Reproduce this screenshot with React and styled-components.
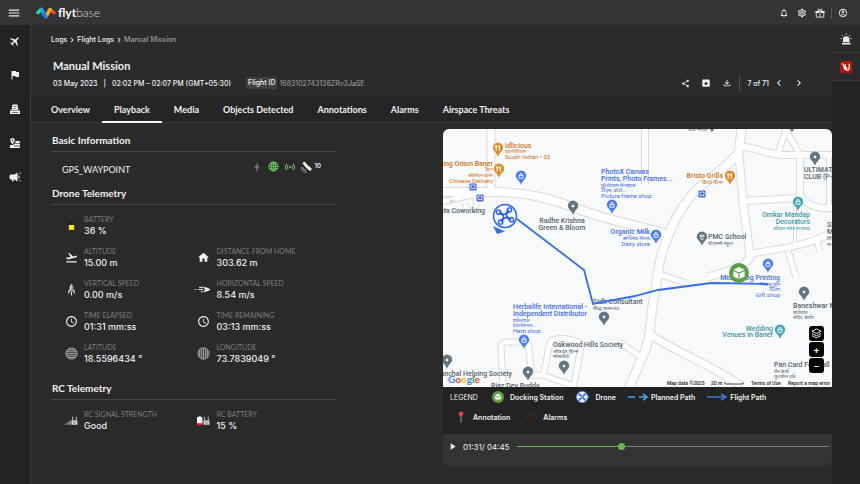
import React, { useState } from 'react'
import styled, { createGlobalStyle } from 'styled-components';
import {
  MdMenu, MdOutlineNotifications, MdOutlineSettings, MdOutlineAccountCircle, MdFlag,
  MdShare, MdArchive, MdOutlineFileDownload, MdChevronLeft, MdChevronRight,
  MdFlightTakeoff, MdHome, MdAccessTime, MdBolt, MdSensors, MdPlayArrow,
  MdLocalAirport,
} from 'react-icons/md';

/* ---------- icons ---------- */

const LogoMark = () => (
  <svg width='20' height='12' viewBox='0 0 20 12' fill='none' strokeLinecap='round' strokeWidth='3.6'>
    <path d='M2 5.4 5 2.4' stroke='#2fd39a' />
    <path d='M14.6 3 18 5.6' stroke='#e8452f' />
    <path d='M5.6 2.6 9.6 9.6' stroke='#1ba4ea' />
    <path d='M10 9.4 14 2.6' stroke='#f9a826' />
    <path d='M8 7.4 9.6 9.6' stroke='#1977e6' />
  </svg>
);

const GiftIcon = () => (
  <svg width='10' height='10' viewBox='0 0 24 24' fill='none' stroke='currentColor' strokeWidth='2'>
    <path d='M1 7h22v5H1z' fill='currentColor' stroke='none' />
    <path d='M3 12v10h18V12M12 7v15' />
    <path d='M12 7C9 7 7 6 7 4s3-3 5 3c2-6 5-5 5-3s-2 3-5 3' />
    <path d='M12 7v5' stroke='#343437' />
  </svg>
);

const DockIcon = () => (
  <svg viewBox='0 0 24 24' fill='currentColor'>
    <path d='M5 14 7 3h10l2 11zM2 15h20v7H2z' />
    <path d='M9 7h6M8 11h5M5 19h14' stroke='#222325' strokeWidth='1.2' />
  </svg>
);

const MissionIcon = () => (
  <svg viewBox='0 0 24 24' fill='currentColor'>
    <path d='M7 2a4.500 4.500 0 0 1 4.500 4.500C11.500 9.500 7 14 7 14S2.500 9.500 2.500 6.500A4.500 4.500 0 0 1 7 2z' />
    <circle cx='7' cy='6.500' r='1.600' fill='#222325' />
    <path d='M13 8h7a2 2 0 0 1 0 4h-7zM2 16h6l3-3h9a2 2 0 0 1 2 2v5a2 2 0 0 1-2 2H2z' />
    <path d='M10 18h12' stroke='#222325' strokeWidth='1.500' />
  </svg>
);

const MegaphoneIcon = () => (
  <svg viewBox='0 0 24 24' fill='currentColor'>
    <path d='M17 3v18l-6-4H9v4H6v-4H4a3 3 0 0 1-3-3v-4a3 3 0 0 1 3-3h7zM19 8c3 1 3 7 0 8zM20 4l3-1v3zM20 20l3 1v-3z' />
  </svg>
);

const SirenIcon = () => (
  <svg viewBox='0 0 24 24' fill='currentColor'>
    <path d='M6 18v-5a6.500 6.500 0 0 1 13 0v5zM4 19h17v4H4z' />
    <path d='M12.500 1v3M4 4l2.500 2.500M21 4l-2.500 2.500M1 11h3M21 11h3' stroke='currentColor' strokeWidth='1.600' />
    <path d='M4 19h17' stroke='#333' strokeWidth='1' fill='none' />
  </svg>
);

const RedIcon = () => (
  <svg width='12' height='12' viewBox='0 0 12 12' fill='none'>
    <rect width='12' height='12' rx='2' fill='#b3160f' />
    <path d='M2 2.600c1.400 0 1.400 1 1.900 3C4.600 9.800 9.200 10.400 9.200 7V2.800M5.200 3v2.600c0 2 1.600 2.600 1.800.6' stroke='#fff' strokeWidth='1.200' />
  </svg>
);

const SatelliteIcon = () => (
  <svg width='12' height='12' viewBox='0 0 24 24' fill='none'>
    <path d='M6 1 11 5 7 9 3 5zM10 5l7 7-4 4-7-7zM17 11l5 5-4 4-5-4z' fill='#f2f2f2' />
    <path d='M1 12a11 11 0 0 0 10 11M4.500 13a7 7 0 0 0 6.500 6.500' stroke='#a8a8a8' strokeWidth='1.800' />
  </svg>
);

const BatteryIcon = () => (
  <svg viewBox='0 0 24 24'>
    <path d='M7 6h3V4h4v2h4v6H7z' fill='#222' />
    <rect x='7' y='11' width='10' height='9' fill='#f4ec15' />
  </svg>
);

const VerticalSpeedIcon = () => (
  <svg viewBox='0 0 24 24' fill='#e6e6e6'>
    <path d='M12 1c3 3 4 6 4 10v5H8v-5c0-4 1-7 4-10z' fill='#8c8c8c' />
    <path d='M12 2v6l-1 6H9v-4c0-3 1-6 3-8zM8 12v7l-2 1v-6zM16 12v7l2 1v-6zM11 16h2v7h-2z' />
  </svg>
);

const HorizontalSpeedIcon = () => (
  <svg viewBox='0 0 24 24' fill='none' stroke='#d6d6d6' strokeWidth='2' overflow='visible'>
    <path d='M13 7.500c4 0 8 2 12 4.500-4 2.500-8 4.500-12 4.500z' fill='#f5f5f5' stroke='none' />
    <path d='M4 8h8M7 16h5M-4 12h3M2 12h10' />
    <circle cx='13.500' cy='12' r='1.800' fill='#444' stroke='none' />
  </svg>
);

const LinesGlobe = ({ vertical }) => (
  <svg viewBox='0 0 24 24' fill='none' stroke='#b4b4b4' strokeWidth='1.400'>
    <circle cx='12' cy='12' r='10.500' fill='#4a4a4a' />
    {vertical
      ? <path d='M12 1.500v21M8 2v20M16 2v20M4.500 5v14M19.500 5v14' />
      : <path d='M1.500 12h21M2 8h20M2 16h20M5 4.500h14M5 19.500h14' />}
  </svg>
);

const GreenGlobe = () => (
  <svg width='11' height='11' viewBox='0 0 24 24' fill='none' stroke='#63c558' strokeWidth='2.200'>
    <circle cx='12' cy='12' r='10' />
    <ellipse cx='12' cy='12' rx='4.500' ry='10' />
    <path d='M2 12h20M4 7h16M4 17h16M12 2v20' />
  </svg>
);

const Remote = () => (
  <g fill='#dcdcdc'>
    <path d='M12 12h11v8H12zM13.500 5h1.500v7h-1.500zM20 5h1.500v7H20z' />
    <path d='M14.500 15h2M19 15h2M16 18h3' stroke='#333' strokeWidth='1.400' />
  </g>
);

const RcSignalIcon = () => (
  <svg viewBox='0 0 24 24'>
    <path d='M0 18h2v2H0zM3 16h2v4H3zM6 14h2v6H6zM9 12h2v8H9z' fill='#a5a5a5' />
    <Remote />
  </svg>
);

const RcBatteryIcon = () => (
  <svg viewBox='0 0 24 24'>
    <path d='M0 6h3V4h4v2h3v12H0z' fill='#fff' />
    <path d='M0 17h10v4H0z' fill='#e02020' />
    <Remote />
  </svg>
);

const LayersIcon = () => (
  <svg width='11' height='11' viewBox='0 0 24 24' fill='none' stroke='#fff' strokeWidth='2' strokeLinejoin='round'>
    <path d='M12 2 22 7 12 12 2 7zM2 12l10 5 10-5M2 16.500l10 5 10-5' />
  </svg>
);

const Cube = () => (
  <g fill='#fff'>
    <path d='M0-6 5.500-3.200 0-.4-5.500-3.200z' />
    <path d='M-5.600-2-.6.600V6l-5-2.600zM5.600-2 .6.600V6l5-2.600z' />
  </g>
);

const DroneShape = () => (
  <g fill='none' stroke='#2a63e8' strokeWidth='1.400'>
    <path d='M-5-5 5 5M5-5-5 5' strokeWidth='2.400' />
    <circle cx='-5.500' cy='-5' r='2.200' />
    <circle cx='5.500' cy='-5' r='2.200' />
    <circle cx='-5.500' cy='5' r='2.200' />
    <circle cx='5.500' cy='5' r='2.200' />
    <circle r='1.800' fill='#fff' />
  </g>
);

/* ---------- data ---------- */

const tabs = ['Overview', 'Playback', 'Media', 'Objects Detected', 'Annotations', 'Alarms', 'Airspace Threats'];

const droneStats = [
  { label: 'BATTERY', value: '36 %', icon: <BatteryIcon />, wide: true },
  { label: 'ALTITUDE', value: '15.00 m', icon: <MdFlightTakeoff /> },
  { label: 'DISTANCE FROM HOME', value: '303.62 m', icon: <MdHome /> },
  { label: 'VERTICAL SPEED', value: '0.00 m/s', icon: <VerticalSpeedIcon /> },
  { label: 'HORIZONTAL SPEED', value: '8.54 m/s', icon: <HorizontalSpeedIcon /> },
  { label: 'TIME ELAPSED', value: '01:31 mm:ss', icon: <MdAccessTime /> },
  { label: 'TIME REMAINING', value: '03:13 mm:ss', icon: <MdAccessTime /> },
  { label: 'LATITUDE', value: '18.5596434 °', icon: <LinesGlobe /> },
  { label: 'LONGITUDE', value: '73.7839049 °', icon: <LinesGlobe vertical /> },
];

const rcStats = [
  { label: 'RC SIGNAL STRENGTH', value: 'Good', icon: <RcSignalIcon /> },
  { label: 'RC BATTERY', value: '15 %', icon: <RcBatteryIcon /> },
];

const ORANGE = '#c8761c';
const BLUE = '#3f6de0';
const GREY = '#56636d';
const TEAL = '#3f98a6';

// [width, path]
const roads = [
  [8, 'M48-4V62'],
  [9, 'M-5 63H50C88 63 108 70 138 81S196 97 225 105'],
  [6, 'M-5 73C8 73 14 67 34 66'],
  [5, 'M22 74C22 84 34 84 33 74V68'],
  [7, 'M202-4V55'],
  [9, 'M299-4 296 22C294 32 262 50 248 67 234 84 230 95 222 115S215 150 211 168 209 210 198 231L184 264'],
  [8, 'M296 26 300 73 307 126C307 138 280 144 264 148'],
  [7, 'M298 18C316 18 320 25 340 26H392'],
  [6, 'M342-4C344 8 336 14 336 24M342 2C350 10 352 18 357 26'],
  [7, 'M357 24V66C364 78 376 80 394 79M300 72 356 69'],
  [5, 'M386 26V78'],
  [3, 'M352 72V118'],
  [7, 'M307 125C330 120 360 120 394 101'],
  [6, 'M345 122 353 148M374 112 377 122'],
  [6, 'M216 145 243 154'],
  [8, 'M208 206C230 222 258 230 297 256'],
  [6, 'M175 212 198 228M-4 240 6 262'],
  [6, 'M60 262 58 218C58 212 64 213 68 213H80C86 213 86 216 86 222L89 246H98C104 244 104 214 109 211 118 208 138 210 138 218L130 260M100 246 128 256'],
];

// [x, y, text, colour, size, anchor]
const labels = [
  [62, 19, 'Idlicious', ORANGE, 7],
  [62, 24, 'इडलीशियस', ORANGE, 5],
  [62, 30, 'South Indian • $$', ORANGE, 6],
  [50, 37, 'King Onion Baner', ORANGE, 7, 'end'],
  [50, 42, 'किंग', ORANGE, 5, 'end'],
  [50, 48, 'ऑनियन बानेर', ORANGE, 5, 'end'],
  [50, 54, 'Chinese Delivery', ORANGE, 6, 'end'],
  [42, 84, 'Vedanta Coworking', GREY, 7, 'end'],
  [119, 94, 'Radhe Krishna', GREY, 7, 'middle'],
  [119, 101, 'Green & Bloom', GREY, 7, 'middle'],
  [158, 45, 'PhotoX Canvas', BLUE, 7],
  [158, 52, 'Prints, Photo Frames...', BLUE, 7],
  [158, 58, 'फोटोएक्स कॅनव्हास', BLUE, 5],
  [158, 63, 'प्रिंट्स, फोटो...', BLUE, 5],
  [158, 69, 'Picture frame shop', BLUE, 6],
  [207, 105, 'Organic Milk', BLUE, 7, 'end'],
  [207, 111, 'ऑर्गेनिक मिल्क', BLUE, 5, 'end'],
  [207, 117, 'Dairy store', BLUE, 6, 'end'],
  [280, 49, 'Bristo Grills', ORANGE, 7, 'end'],
  [280, 55, 'ब्रिस्टो ग्रिल्स', ORANGE, 5, 'end'],
  [265, 110, 'PMC School', GREY, 7],
  [265, 116, 'पीएमसी स्कूल', GREY, 5],
  [367, 88, 'Omkar Mandap', TEAL, 7, 'end'],
  [367, 95, 'Decorators', TEAL, 7, 'end'],
  [367, 101, 'ओंकार मंडप सजावट', TEAL, 5, 'end'],
  [361, 43, 'ULTIMATE', GREY, 7],
  [361, 50, 'CLUB (P-', GREY, 7],
  [384, 98, 'SH', GREY, 7],
  [384, 105, 'MA', GREY, 7],
  [384, 111, 'शि', GREY, 5],
  [384, 117, 'मा', GREY, 5],
  [245, 2, 'कॅफे मराठी', GREY, 5],
  [337, 151, 'Midas Dog Printing', BLUE, 7, 'end'],
  [337, 157, 'मिडास डॉग', BLUE, 5, 'end'],
  [337, 162, 'प्रिंटिंग', BLUE, 5, 'end'],
  [337, 168, 'Gift shop', BLUE, 6, 'end'],
  [350, 179, 'Baneshwar Mandir', GREY, 7],
  [350, 185, 'बाणेश्वर', GREY, 5],
  [350, 190, 'मंदिर, बाणेर', GREY, 5],
  [330, 202, 'Wedding', TEAL, 7, 'end'],
  [330, 208, 'Venues in Baner', TEAL, 7, 'end'],
  [331, 238, 'Pan Card Football', GREY, 7],
  [331, 244, 'पॅन कार्ड', GREY, 5],
  [331, 249, 'फुटबॉल टर्फ', GREY, 5],
  [150, 175, 'Sidh Consultant', GREY, 7],
  [150, 181, 'सिद्ध कन्सल्टंट', GREY, 5],
  [70, 180, 'Herbalife International -', BLUE, 7],
  [70, 187, 'Independent Distributor', BLUE, 7],
  [70, 193, 'हर्बलाइफ', BLUE, 5],
  [70, 198, 'इंटरनॅशनल...', BLUE, 5],
  [70, 204, 'Herb shop', BLUE, 6],
  [110, 218, 'Oakwood Hills Society', GREY, 7],
  [110, 224, 'ओकवुड हिल्स', GREY, 5],
  [110, 229, 'सोसायटी', GREY, 5],
  [69, 247, 'Aanchal Helping Society', GREY, 7, 'end'],
  [48, 259, 'Riaz Dev Buddy', GREY, 7],
];

// [x, y, colour, glyph]
const pins = [
  [55, 19, '#de8f2b', 'food'], [56, 40, '#de8f2b', 'food'], [287, 47, '#de8f2b', 'food'],
  [78, 47, '#4b7df0', 'bag'], [169, 76, '#4b7df0', 'bag'], [213, 106, '#4b7df0', 'bag'],
  [325, 135, '#4b7df0', 'bag'], [81, 211, '#4b7df0', 'bag'],
  [130, 77, '#66757f', 'dot'], [259, 108, '#66757f', 'book'], [372, 28, '#66757f', 'dot'],
  [361, 163, '#66757f', 'dot'], [161, 188, '#66757f', 'dot'], [121, 237, '#66757f', 'dot'],
  [4, 231, '#66757f', 'dot'], [85, 243, '#66757f', 'dot'],
  [269, -5, '#66757f', 'dot'], [349, -5, '#66757f', 'dot'],
  [355, 73, '#46a6b5', 'bag'], [337, 201, '#46a6b5', 'bag'],
];

const stops = [[30, 58], [37, 69], [259, 65]];

const glyphs = {
  food: 'M-1.800-2.500v2M-1.800-.6V2.800M1.400-2.600V2.800M-2.600-2.500v1.600h1.600v-1.600M.8-2.400v2.600',
  bag: 'M-2-.6h4v2.800h-4zM-1-.8v-1C-1-3 1-3 1-1.800v1',
  book: 'M-2.400-1.200 0-2.200l2.400 1L0-.2zM-1.400.8v1L0 2.400l1.400-.6v-1',
  dot: 'M-.8 0h1.600M0-.8v1.600',
};

/* ---------- map ---------- */

const Pin = ({ x, y, color, glyph }) => (
  <g transform={`translate(${x} ${y})`}>
    <path d='M0-5.400A5.200 5.200 0 0 1 5.200-.2C5.200 3.400 1 4.600 0 9-1 4.600-5.200 3.400-5.200-.2A5.200 5.200 0 0 1 0-5.400z' fill={color} />
    <path d={glyphs[glyph]} fill='none' stroke='#fff' strokeWidth={glyph === 'dot' ? 2.4 : 0.9} />
  </g>
);

const FlightMap = () => (
  <MapFrame>
    <MapSvg viewBox='0 0 389 258' role='img' aria-label='Flight map'>
      <rect width='389' height='258' fill='#f8f9fb' />
      <g fill='none' stroke='#d8dbde'>
        {roads.map(([w, d]) => <path key={d} d={d} strokeWidth={w + 1} />)}
      </g>
      <g fill='none' stroke='#fefefe'>
        {roads.map(([w, d]) => <path key={d} d={d} strokeWidth={w - 1} />)}
      </g>
      <path d='M7 72h6M9 70.500 7 72l2 1.500' fill='none' stroke='#b5b9bd' strokeWidth='.7' />
      {stops.map(([x, y]) => (
        <g key={x} transform={`translate(${x} ${y})`}>
          <rect x='-3.500' y='-3.500' width='7' height='7' rx='1' fill='#3c62e0' />
          <path d='M-2-2h4v3.400h-4zM-1.500 2h.5M1 2h.5' fill='none' stroke='#fff' strokeWidth='.8' />
        </g>
      ))}
      {labels.map(([x, y, text, color, size, anchor]) => (
        <MapLabel key={text} x={x} y={y} fill={color} $size={size} textAnchor={anchor || 'start'}>{text}</MapLabel>
      ))}
      {pins.map(([x, y, color, glyph]) => <Pin key={`${x}-${y}`} x={x} y={y} color={color} glyph={glyph} />)}
      <path d='M74 90 141 141 150 175 192 167 215 161 268 154 325 155' fill='none' stroke='#326ee8' strokeWidth='1.800' />
      <path d='M50 97 62 102.500 54 105z' fill='#326ee8' />
      <g transform='translate(62 87)'>
        <circle r='11.500' fill='#f4f8ff' stroke='#2a63e8' strokeWidth='1.500' />
        <g transform='rotate(-12)'><DroneShape /></g>
      </g>
      <g transform='translate(296 144)'>
        <circle r='10' fill='#5b9f46' />
        <Cube />
      </g>
      <GoogleMark x='5' y='254'>
        <tspan fill='#4285f4'>G</tspan><tspan fill='#ea4335'>o</tspan><tspan fill='#fbbc05'>o</tspan><tspan fill='#4285f4'>g</tspan><tspan fill='#34a853'>l</tspan><tspan fill='#ea4335'>e</tspan>
      </GoogleMark>
      <Credit x='224' y='256'>Map data ©2023</Credit>
      <Credit x='268' y='256'>20 m</Credit>
      <path d='M282 253v2h18v-2' fill='none' stroke='#222' strokeWidth='.8' />
      <Credit x='308' y='256'>Terms of Use</Credit>
      <Credit x='387' y='256' textAnchor='end'>Report a map error</Credit>
    </MapSvg>
    <MapControls>
      <MapButton aria-label='Layers'><LayersIcon /></MapButton>
      <MapButton aria-label='Zoom in'>+</MapButton>
      <MapButton aria-label='Zoom out'>−</MapButton>
    </MapControls>
  </MapFrame>
);

const Stat = ({ label, value, icon, wide }) => (
  <StatItem $wide={wide}>
    <StatIcon>{icon}</StatIcon>
    <div>
      <StatLabel>{label}</StatLabel>
      <StatValue>{value}</StatValue>
    </div>
  </StatItem>
);

const Telemetry = () => (
  <section>
    <SectionTitle>Basic Information</SectionTitle>
    <BasicRow>
      <span>GPS_WAYPOINT</span>
      <Status>
        <MdBolt size={12} color='#777' />
        <GreenGlobe />
        <MdSensors size={12} color='#63c558' />
        <Satellites><SatelliteIcon /> 10</Satellites>
      </Status>
    </BasicRow>
    <SectionTitle>Drone Telemetry</SectionTitle>
    <StatGrid>
      {droneStats.map((stat) => <Stat key={stat.label} {...stat} />)}
    </StatGrid>
    <SectionTitle>RC Telemetry</SectionTitle>
    <StatGrid>
      {rcStats.map((stat) => <Stat key={stat.label} {...stat} />)}
    </StatGrid>
  </section>
);

const Legend = () => (
  <LegendBox>
    <LegendRow>
      <LegendTitle>LEGEND</LegendTitle>
      <LegendItem $gap={6}>
        <svg width='12' height='12' viewBox='-11 -11 22 22'><circle r='11' fill='#5b9f46' /><Cube /></svg>
        Docking Station
      </LegendItem>
      <LegendItem $gap={6}>
        <svg width='14' height='12' viewBox='-11 -11 25 22'>
          <path d='M9-5 14 0 9 5z' fill='#2a63e8' />
          <circle r='10.500' fill='#fff' stroke='#3f74f0' strokeWidth='1.500' /><DroneShape />
        </svg>
        Drone
      </LegendItem>
      <LegendItem $gap={3}>
        <svg width='20' height='8' viewBox='0 0 20 8' fill='none' stroke='#4fa3e8' strokeWidth='1.500'>
          <path d='M0 4h7M11 4h8M15 .8 19 4l-4 3.200' />
        </svg>
        Planned Path
      </LegendItem>
      <LegendItem $gap={3}>
        <svg width='20' height='8' viewBox='0 0 20 8' fill='none' stroke='#3f74d8' strokeWidth='1.500'>
          <path d='M0 4h19M14 .8 19 4l-5 3.200' />
        </svg>
        Flight Path
      </LegendItem>
    </LegendRow>
    <LegendRow $indent>
      <LegendItem $gap={9}>
        <svg width='6' height='12' viewBox='0 0 6 12'>
          <path d='M3 4v7.500' stroke='#9a9a9a' strokeWidth='1' /><circle cx='3' cy='2.800' r='2.400' fill='#e2453f' />
        </svg>
        Annotation
      </LegendItem>
      <LegendItem $gap={9}>
        <svg width='8' height='8' viewBox='0 0 8 8'>
          <circle cx='4' cy='4' r='3' fill='none' stroke='#8e1f1f' strokeDasharray='1.500 .8' />
        </svg>
        Alarms
      </LegendItem>
    </LegendRow>
  </LegendBox>
);

const App = () => {
  const [time, setTime] = useState(94);

  return (
    <Page>
      <GlobalStyle />
      <TopBar>
        <IconButton aria-label='Menu'><MdMenu size={14} /></IconButton>
        <Logo href='#'><LogoMark /><span><b>flyt</b>base</span></Logo>
        <TopActions>
          <IconButton aria-label='Notifications'><MdOutlineNotifications size={10} /></IconButton>
          <IconButton aria-label='Settings'><MdOutlineSettings size={10} /></IconButton>
          <IconButton aria-label='Gifts'><GiftIcon /></IconButton>
          <TopDivider />
          <IconButton aria-label='Account'><MdOutlineAccountCircle size={10} /></IconButton>
        </TopActions>
      </TopBar>
      <Shell>
        <SideNav>
          <NavItem href='#' aria-label='Flights'><Tilt><MdLocalAirport /></Tilt></NavItem>
          <NavItem href='#' aria-label='Missions'><MdFlag /></NavItem>
          <NavItem href='#' aria-label='Docks'><DockIcon /></NavItem>
          <NavItem href='#' aria-label='Routes'><MissionIcon /></NavItem>
          <NavItem href='#' aria-label='Announcements'><MegaphoneIcon /></NavItem>
        </SideNav>
        <Main>
          <PageHead>
            <Crumbs>
              <a href='#'>Logs</a><MdChevronRight size={10} />
              <a href='#'>Flight Logs</a><MdChevronRight size={10} />
              <span>Manual Mission</span>
            </Crumbs>
            <Title>Manual Mission</Title>
            <MetaRow>
              <span>03 May 2023</span>
              <span>|</span>
              <span>02:02 PM – 02:07 PM (GMT+05:30)</span>
              <FlightId><b>Flight ID</b>1683102743138ZRv3JaSE</FlightId>
              <HeadActions>
                <IconButton aria-label='Share'><MdShare size={9} /></IconButton>
                <IconButton aria-label='Archive'><MdArchive size={10} /></IconButton>
                <IconButton aria-label='Download'><MdOutlineFileDownload size={10} /></IconButton>
                <Pager>
                  <span>7 of 71</span>
                  <IconButton aria-label='Previous'><MdChevronLeft size={12} /></IconButton>
                  <IconButton aria-label='Next'><MdChevronRight size={12} /></IconButton>
                </Pager>
              </HeadActions>
            </MetaRow>
          </PageHead>
          <Tabs>
            {tabs.map((tab) => <Tab key={tab} href='#' $active={tab === 'Playback'}>{tab}</Tab>)}
          </Tabs>
          <Content>
            <Telemetry />
            <Playback>
              <FlightMap />
              <Legend />
              <Player>
                <IconButton aria-label='Play'><MdPlayArrow size={11} /></IconButton>
                <Time htmlFor='seek'>01:31/ 04:45</Time>
                <Seek
                  id='seek'
                  type='range'
                  min='0'
                  max='285'
                  value={time}
                  onChange={(e) => setTime(Number(e.target.value))}
                  style={{ '--played': `${(time / 285) * 100}%` }}
                />
              </Player>
            </Playback>
          </Content>
        </Main>
        <RightRail>
          <RailButton aria-label='Alerts'><SirenIcon /></RailButton>
          <RailButton aria-label='Partner app'><RedIcon /></RailButton>
        </RightRail>
      </Shell>
    </Page>
  );
}

/* ---------- styles ---------- */

const GlobalStyle = createGlobalStyle`
  * { box-sizing: border-box; }
  body {
    margin: 0;
    background: #2a2a2a;
    color: #f0f0f0;
    font-family: Lato, 'Noto Sans', sans-serif;
    font-size: 8px;
  }
  a { color: inherit; text-decoration: none; }
  svg { display: block; }
`;

const Page = styled.div`
  display: flex;
  flex-direction: column;
  min-height: 100vh;
`;

const TopBar = styled.header`
  display: flex;
  align-items: center;
  height: 25px;
  padding: 0 12px 0 7px;
  background: #343437;
`;

const IconButton = styled.button`
  display: flex;
  align-items: center;
  justify-content: center;
  padding: 0;
  border: 0;
  background: none;
  color: #ececec;
  font: inherit;
  cursor: pointer;
`;

const Logo = styled.a`
  display: flex;
  align-items: center;
  gap: 2px;
  margin-left: 15px;
  color: #d4d4d4;
  font-size: 12px;
  font-weight: 300;
  line-height: 16px;

  b {
    color: #fff;
    font-weight: 700;
  }
`;

const TopActions = styled.div`
  display: flex;
  align-items: center;
  gap: 8px;
  margin-left: auto;
`;

const TopDivider = styled.span`
  width: 1px;
  height: 12px;
  margin: 0 -2px;
  background: #55555a;
`;

const Shell = styled.div`
  display: flex;
  flex: 1;
`;

const SideNav = styled.nav`
  display: flex;
  flex-direction: column;
  gap: 22px;
  width: 31px;
  padding-top: 10px;
  border-right: 1px solid #3d3d40;
  background: #222325;
`;

const NavItem = styled.a`
  display: flex;
  justify-content: center;
  height: 12px;
  color: #f2f2f2;

  svg {
    width: 12px;
    height: 12px;
  }
`;

const Tilt = styled.span`
  transform: rotate(45deg);
  height: 12px;
`;

const Main = styled.main`
  display: flex;
  flex: 1;
  flex-direction: column;
  min-width: 0;
`;

const PageHead = styled.div`
  padding: 10px 27px 5px 20px;
  background: #2b2b2b;
`;

const Crumbs = styled.nav`
  display: flex;
  align-items: center;
  font-family: Inter, sans-serif;
  font-size: 7px;
  font-weight: 500;
  line-height: 10px;

  span {
    color: #9c9c9c;
  }
`;

const Title = styled.h1`
  margin: 13px 2px 0;
  font-size: 11px;
  font-weight: 700;
  line-height: 15px;
`;

const MetaRow = styled.div`
  display: flex;
  align-items: center;
  gap: 6px;
  height: 16px;
  margin: 2px 0 0 2px;
  font-family: Inter, sans-serif;
  font-size: 7px;
  font-weight: 500;
`;

const FlightId = styled.span`
  display: flex;
  align-items: center;
  gap: 2px;
  margin-left: 9px;
  color: #a6a6a6;
  font-weight: 400;

  b {
    padding: 1px 2px;
    border-radius: 2px;
    background: #404040;
    color: #f0f0f0;
    font-weight: 500;
    line-height: 10px;
  }
`;

const HeadActions = styled.div`
  display: flex;
  align-items: center;
  gap: 11px;
  margin-left: auto;
`;

const Pager = styled.div`
  display: flex;
  align-items: center;
  gap: 8px;
  height: 16px;
  margin-left: -4px;
  padding-left: 7px;
  border-left: 1px solid #505050;

  span {
    margin-right: -4px;
  }
`;

const Tabs = styled.nav`
  display: flex;
  padding-left: 8px;
  border-bottom: 1px solid #3a3a3a;
  background: #252525;
`;

const Tab = styled.a`
  height: 27px;
  margin-bottom: -1px;
  padding: 0 12px;
  border-bottom: 2px solid ${({ $active }) => ($active ? '#f5f5f5' : 'transparent')};
  font-size: 9px;
  font-weight: 700;
  line-height: 27px;
`;

const Content = styled.div`
  display: grid;
  flex: 1;
  grid-template-columns: minmax(0, 285fr) minmax(0, 389fr);
  align-items: start;
  gap: 106px;
  padding: 6px 0 18px 21px;
`;

const SectionTitle = styled.h2`
  margin: 0;
  padding: 4px 0;
  border-bottom: 1px solid #4a4a4a;
  font-size: 10px;
  font-weight: 700;
  line-height: 14px;
`;

const BasicRow = styled.div`
  display: flex;
  align-items: center;
  justify-content: space-between;
  height: 30px;
  padding: 4px 16px 0 10px;
  font-size: 9px;
`;

const Status = styled.div`
  display: flex;
  gap: 5px;
  padding-bottom: 4px;
`;

const Satellites = styled.span`
  display: flex;
  gap: 2px;
  font-family: Inter, sans-serif;
  font-size: 6px;
  font-weight: 600;
  line-height: 10px;
`;

const StatGrid = styled.div`
  display: grid;
  grid-template-columns: repeat(2, minmax(0, 1fr));
  gap: 8px 0;
  padding: 8px 10px 12px;
`;

const StatItem = styled.div`
  display: flex;
  align-items: center;
  gap: 4px;
  grid-column: ${({ $wide }) => ($wide ? '1 / -1' : 'auto')};
`;

const StatIcon = styled.span`
  display: flex;
  justify-content: center;
  width: 18px;

  svg {
    width: 13px;
    height: 13px;
  }
`;

const StatLabel = styled.div`
  color: #7d7d7d;
  font-size: 7px;
  line-height: 12px;
`;

const StatValue = styled.div`
  font-family: Inter, sans-serif;
  font-size: 9px;
  font-weight: 500;
  line-height: 12px;
`;

const Playback = styled.section`
  overflow: hidden;
  border-radius: 6px;
`;

const MapFrame = styled.div`
  position: relative;
`;

const MapSvg = styled.svg`
  width: 100%;
`;

const MapLabel = styled.text`
  font-family: Roboto, 'Noto Sans', sans-serif;
  font-size: ${({ $size }) => $size}px;
  font-weight: ${({ $size }) => ($size > 6 ? 500 : 400)};
`;

const GoogleMark = styled.text`
  font-family: Lato, sans-serif;
  font-size: 10px;
  font-weight: 700;
`;

const Credit = styled.text`
  fill: #222;
  font-family: Roboto, sans-serif;
  font-size: 5px;
  font-weight: 500;
`;

const MapControls = styled.div`
  position: absolute;
  right: 8px;
  bottom: 14px;
  display: grid;
  gap: 1px;
`;

const MapButton = styled.button`
  display: flex;
  align-items: center;
  justify-content: center;
  width: 15px;
  height: 15px;
  padding: 0;
  border: 0;
  border-radius: 3px;
  background: #000;
  color: #fff;
  font: 700 10px Lato, sans-serif;
`;

const LegendBox = styled.div`
  display: grid;
  gap: 8px;
  padding: 4px 7px 11px;
  background: #232323;
`;

const LegendRow = styled.div`
  display: flex;
  align-items: center;
  gap: ${({ $indent }) => ($indent ? 16 : 12)}px;
  height: 12px;
  padding-left: ${({ $indent }) => ($indent ? 8 : 0)}px;
  font-family: Inter, sans-serif;
  font-size: 7px;
`;

const LegendTitle = styled.span`
  margin-right: 2px;
`;

const LegendItem = styled.span`
  display: flex;
  align-items: center;
  gap: ${({ $gap }) => $gap}px;
  font-weight: 600;
`;

const Player = styled.div`
  display: flex;
  align-items: center;
  height: 32px;
  padding: 0 3px 7px 4px;
  background: #333;
`;

const Time = styled.label`
  margin: 0 8px 0 5px;
  font-family: Inter, sans-serif;
  font-size: 8px;
`;

const Seek = styled.input`
  flex: 1;
  min-width: 0;
  height: 7px;
  margin: 0;
  appearance: none;
  background: none;

  &::-webkit-slider-runnable-track {
    height: 7px;
    background: linear-gradient(to right, #6ab850 var(--played), #808080 var(--played)) center / 100% 1px no-repeat;
  }

  &::-webkit-slider-thumb {
    appearance: none;
    width: 7px;
    height: 7px;
    border-radius: 50%;
    background: #6ab850;
  }
`;

const RightRail = styled.aside`
  width: 28px;
  background: #222325;
`;

const RailButton = styled(IconButton)`
  width: 100%;
  height: 28px;
  border-bottom: 1px solid #3a3a3c;
  background: #2a2a2b;

  svg {
    width: 12px;
    height: 12px;
  }
`;

export default App;
